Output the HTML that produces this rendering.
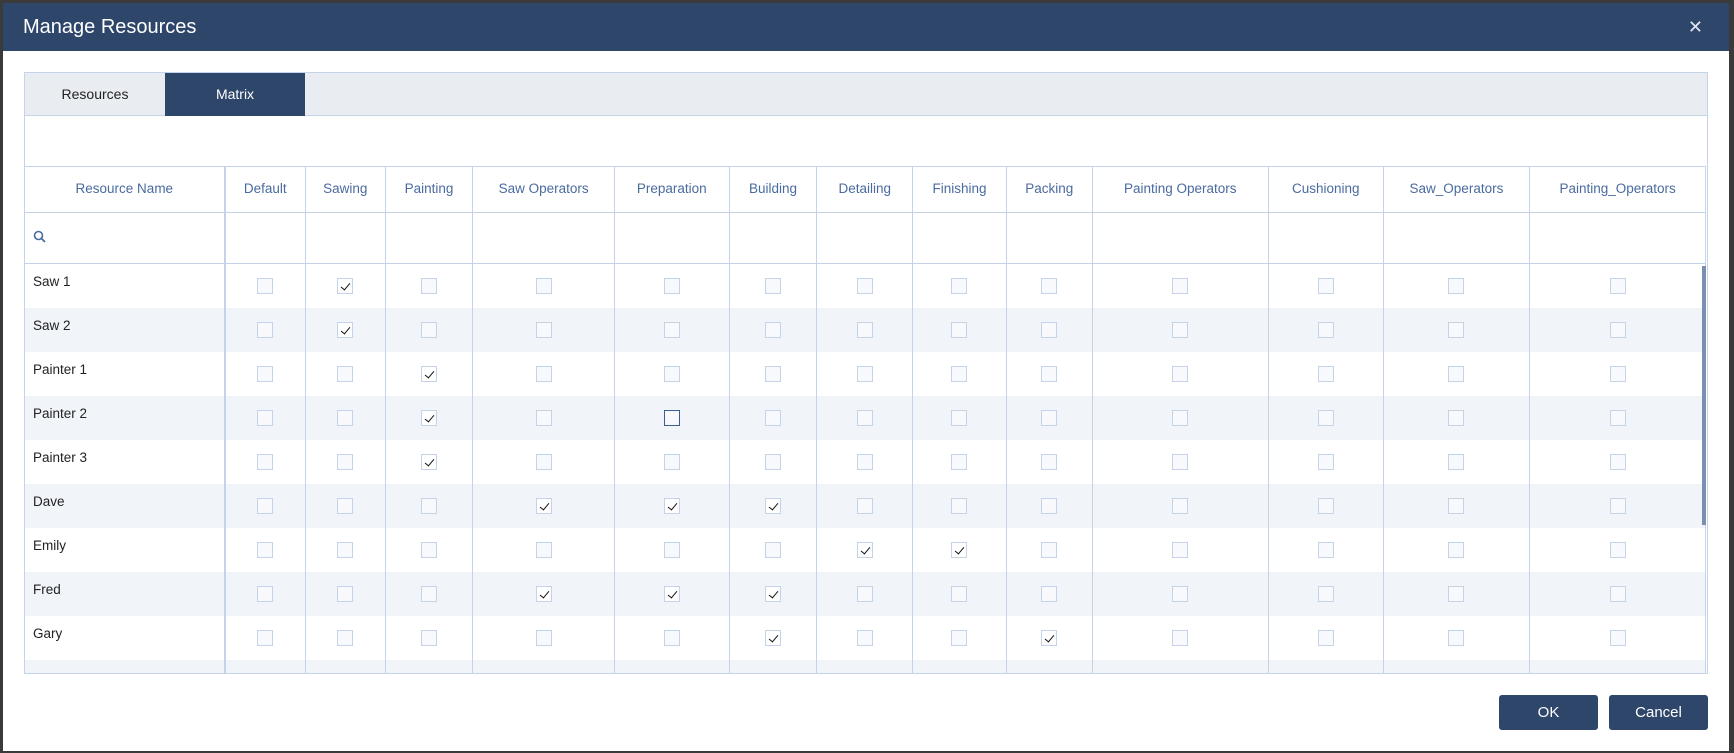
<!DOCTYPE html>
<html><head><meta charset="utf-8"><style>
*{box-sizing:border-box;margin:0;padding:0}
body{width:1734px;height:753px;background:#3a3a3a;font-family:"Liberation Sans",sans-serif;position:relative;overflow:hidden}
#dlg{position:absolute;left:3px;top:3px;width:1726px;height:748px;background:#fff}
#hdr{position:absolute;left:0;top:0;width:100%;height:48px;background:#2e466a;color:#fff;font-size:20px;line-height:48px;padding-left:20px}
#x{position:absolute;right:26px;top:0;font-size:18px;color:#dfe6f0}
#tabs{position:absolute;left:24px;top:72px;width:1684px;height:44px;background:#e9edf2;border:1px solid #c5d3e8}
.tab{position:absolute;top:0;height:43px;line-height:43px;text-align:center;font-size:14px;width:140px}
#wrap{position:absolute;left:24px;top:116px;width:1684px;height:558px;border:1px solid #c5d3e8;border-top:none;overflow:hidden}
table{border-collapse:collapse;table-layout:fixed;position:absolute;left:-1px;top:50px}
td{border-left:1px solid #c5d3e8;border-right:1px solid #c5d3e8;text-align:center;font-size:13.5px;height:44px;padding:0}
tr.h td{color:#4a6b9f;height:46px;border-bottom:1px solid #c5d3e8;border-top:1px solid #c5d3e8;vertical-align:top;padding-top:14px}
tr.f td{height:51px;border-bottom:1px solid #c5d3e8}
tr.e td{background:#f1f5fa}
td.n{text-align:left;padding-left:8px;color:#222;vertical-align:top;padding-top:10px}
td.c0{border-right:2px solid #c5d3e8}
.b{display:inline-block;width:16px;height:16px;border:1px solid #c5d3e8;background:#f7f9fc;vertical-align:middle;position:relative}
.k{background:#fff}
.k::after{content:"";position:absolute;left:5px;top:2px;width:4px;height:8px;border:solid #111;border-width:0 1.5px 1.5px 0;transform:rotate(40deg)}
.d{border-color:#3d5f94;background:#f7f9fc}
#sb{position:absolute;left:1702px;top:266px;width:4px;height:259px;background:#7b8fb0}
.btn{position:absolute;top:695px;width:99px;height:35px;background:#2e466a;color:#fff;border-radius:3px;text-align:center;line-height:35px;font-size:15px}
</style></head><body>
<div id="dlg">
<div id="hdr">Manage Resources<span id="x">✕</span></div>
</div>
<div id="tabs"><div class="tab" style="left:0;color:#222">Resources</div><div class="tab" style="left:140px;background:#2e466a;color:#fff">Matrix</div></div>
<div id="wrap">
<table>
<colgroup><col style="width:201px"><col style="width:81px"><col style="width:80px"><col style="width:88px"><col style="width:142px"><col style="width:115px"><col style="width:88px"><col style="width:96px"><col style="width:94px"><col style="width:86px"><col style="width:177px"><col style="width:115px"><col style="width:147px"><col style="width:176px"></colgroup>
<tr class="h"><td class="c0">Resource Name</td><td>Default</td><td>Sawing</td><td>Painting</td><td>Saw Operators</td><td>Preparation</td><td>Building</td><td>Detailing</td><td>Finishing</td><td>Packing</td><td>Painting Operators</td><td>Cushioning</td><td>Saw_Operators</td><td>Painting_Operators</td></tr>
<tr class="f"><td class="c0" style="text-align:left;padding-left:8px"><svg width="14" height="14" viewBox="0 0 14 14"><circle cx="5.5" cy="5.5" r="4" fill="none" stroke="#4a6b9f" stroke-width="1.6"/><path d="M8.5 8.5L12 12" stroke="#4a6b9f" stroke-width="1.8"/></svg></td><td></td><td></td><td></td><td></td><td></td><td></td><td></td><td></td><td></td><td></td><td></td><td></td><td></td></tr>
</table>
</div>
<div id="sb"></div>
<div class="btn" style="left:1499px">OK</div>
<div class="btn" style="left:1609px">Cancel</div>
<script>
var rows=[["Saw 1",[2]],["Saw 2",[2]],["Painter 1",[3]],["Painter 2",[3],5],["Painter 3",[3]],["Dave",[4,5,6]],["Emily",[7,8]],["Fred",[4,5,6]],["Gary",[6,9]],["",[]]];
var t=document.querySelector("table");
rows.forEach(function(r,i){var tr=document.createElement("tr");if(i%2)tr.className="e";
var h='<td class="n c0">'+r[0]+'</td>';for(var c=1;c<=13;c++){var cl="b";if(r[1].indexOf(c)>=0)cl+=" k";if(r[2]===c)cl+=" d";h+='<td><span class="'+cl+'"></span></td>';}
tr.innerHTML=h;t.appendChild(tr);});
</script>
</body></html>
